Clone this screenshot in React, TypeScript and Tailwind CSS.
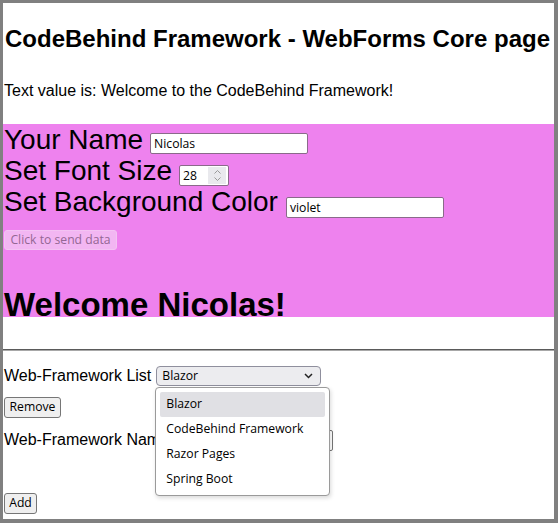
import React from "react";

const ctl = "font-['Open_Sans','Noto_Sans',sans-serif] text-[12.2px]";

export default function App() {
  return (
    <div className="w-[558px] h-[523px] border-l-[3px] border-t-[3px] border-r-[4px] border-b-[4px] border-[#808080] bg-white overflow-hidden font-['Liberation_Sans',Arial,sans-serif] text-black">
      <h2 className="text-[24px] font-bold leading-[28px] pt-[22px] pl-[2px]">
        CodeBehind Framework - WebForms Core page
      </h2>
      <p className="text-[16px] leading-[18px] mt-[29px] pl-[1px]">
        Text value is: Welcome to the CodeBehind Framework!
      </p>

      <div className="bg-[#ee82ee] mt-[24px] pl-[1px]">
        <div className="flex items-center text-[28px] leading-[31px] h-[31px]">
          <span>Your Name</span>
          <div className={`ml-[7px] mt-[8px] w-[158px] h-[21px] bg-white border border-[#8a6a8a] rounded-[2px] flex items-center pl-[3px] ${ctl}`}>
            Nicolas
          </div>
        </div>
        <div className="flex items-center text-[28px] leading-[31px] h-[31px]">
          <span>Set Font Size</span>
          <div className={`ml-[7px] mt-[10px] w-[50px] h-[21px] bg-white border border-[#8a6a8a] rounded-[2px] flex items-center justify-between pl-[3px] pr-[2px] ${ctl}`}>
            <span>28</span>
            <div className="w-[18px] h-[17px] bg-[#e9e9ed] flex items-center justify-center">
              <svg width="9" height="13" viewBox="0 0 9 13" fill="none" stroke="#9a9a9a" strokeWidth="1">
                <polyline points="1.5,4.5 4.5,1.5 7.5,4.5" />
                <polyline points="1.5,8.5 4.5,11.5 7.5,8.5" />
              </svg>
            </div>
          </div>
        </div>
        <div className="flex items-center text-[28px] leading-[31px] h-[31px]">
          <span>Set Background Color</span>
          <div className={`ml-[8px] mt-[12px] w-[158px] h-[21px] bg-white border border-[#8a6a8a] rounded-[2px] flex items-center pl-[3px] ${ctl}`}>
            violet
          </div>
        </div>
        <div className="mt-[13px]">
          <div className={`w-[113px] h-[20px] bg-[#f2b6f2] border border-[#f3c3f3] rounded-[3px] text-[#946694] flex items-center justify-center ${ctl}`}>
            Click to send data
          </div>
        </div>
        <h1 className="text-[33px] font-bold leading-[25px] mt-[42px]">Welcome Nicolas!</h1>
      </div>

      <div className="mt-[32px] border-t border-b border-t-[#5a5a5a] border-b-[#a8a8a8]" />

      <div className="mt-[15px] flex items-center h-[20px] pl-[1px] text-[16px]">
        <span className="leading-[20px]">Web-Framework List</span>
        <div className="relative ml-[5px]">
          <div className={`w-[165px] h-[20px] bg-[#ececef] border border-[#8f8f9d] rounded-[4px] flex items-center justify-between pl-[5px] pr-[7px] ${ctl}`}>
            <span>Blazor</span>
            <svg width="9" height="6" viewBox="0 0 9 6" fill="none" stroke="#222" strokeWidth="1.5">
              <polyline points="1,1 4.5,4.5 8,1" />
            </svg>
          </div>
          <div className={`absolute left-[-1px] top-[21px] w-[175px] h-[109px] bg-white border border-[#9a9a9a] rounded-[4px] shadow-[1px_2px_4px_rgba(0,0,0,0.15)] px-[4px] pt-[4px] z-10 ${ctl}`}>
            <div className="h-[25px] bg-[#e0e0e4] rounded-[2px] flex items-center pl-[6px]">Blazor</div>
            <div className="h-[25px] flex items-center pl-[6px]">CodeBehind Framework</div>
            <div className="h-[25px] flex items-center pl-[6px]">Razor Pages</div>
            <div className="h-[25px] flex items-center pl-[6px]">Spring Boot</div>
          </div>
        </div>
      </div>

      <div className="mt-[11px] pl-[1px]">
        <div className={`w-[57px] h-[21px] bg-[#efefef] border border-[#767676] rounded-[3px] flex items-center justify-center ${ctl}`}>
          Remove
        </div>
      </div>

      <div className="mt-[12px] flex items-center h-[21px] pl-[1px] text-[16px]">
        <span className="leading-[20px] -mt-[2px]">Web-Framework Name</span>
        <div className="ml-[5px] w-[159px] h-[21px] bg-white border border-[#767676] rounded-[2px]" />
      </div>

      <div className="mt-[42px] pl-[1px]">
        <div className={`w-[33px] h-[21px] bg-[#efefef] border border-[#767676] rounded-[3px] flex items-center justify-center ${ctl}`}>
          Add
        </div>
      </div>
    </div>
  );
}
